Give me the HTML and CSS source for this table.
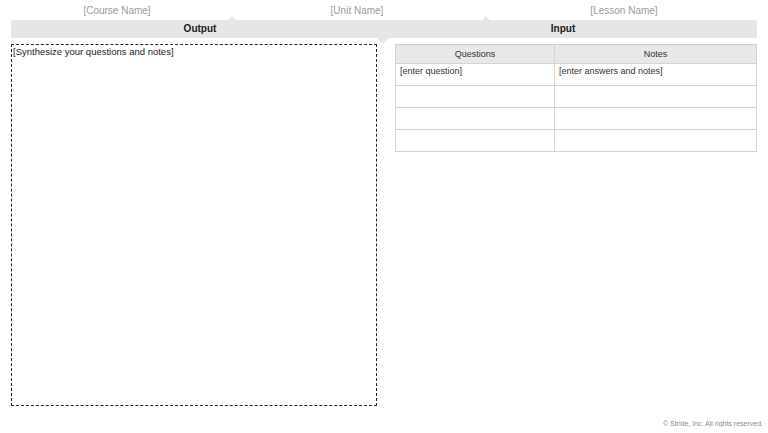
FILE: index.html
```html
<!DOCTYPE html>
<html lang="en">
<head>
    <meta charset="UTF-8">
    <meta name="viewport" content="width=device-width, initial-scale=1.0">
    <title>Notes</title>
    <link rel="stylesheet" href="styles.css">
</head>
<body>
    <div class="page">
        <div class="crumbs">
            <div class="crumb">[Course Name]</div>
            <div class="crumb notch-unit">[Unit Name]</div>
            <div class="crumb notch-lesson">[Lesson Name]</div>
        </div>
        <div class="bar">
            <div class="bar-title out">Output</div>
            <div class="bar-title in">Input</div>
        </div>
        <div class="main">
            <div class="synth">[Synthesize your questions and notes]</div>
            <table class="notes">
                <tr><th class="q">Questions</th><th>Notes</th></tr>
                <tr><td>[enter question]</td><td>[enter answers and notes]</td></tr>
                <tr><td></td><td></td></tr>
                <tr><td></td><td></td></tr>
                <tr><td></td><td></td></tr>
            </table>
        </div>
        <div class="footer">&copy; Stride, Inc. All rights reserved.</div>
    </div>
</body>
</html>
```

FILE: styles.css
```css
body {margin: 0; font-family: "Liberation Sans", Arial, sans-serif; color: #222; background: #fff;}
.page {padding: 0 11px; width: 746px;}

.crumbs {display: grid; grid-template-columns: 212px 268px 266px; height: 20px;}
.crumb {font-size: 10px; color: #9a9a9a; text-align: center; line-height: 22px; position: relative;}
.notch-unit::before, .notch-lesson::before {content: ""; position: absolute; bottom: 0; border: 6px solid transparent; border-top: 0; border-bottom: 6px solid #e6e6e6;}
.notch-unit::before {left: 3px;}
.notch-lesson::before {left: -11px;}

.bar {display: grid; grid-template-columns: 372px 374px; background: #e6e6e6; height: 18px; position: relative;}
.bar::after {content: ""; position: absolute; left: 366px; top: 18px; border: 6px solid transparent; border-bottom: 0; border-top: 6px solid #e6e6e6;}
.bar-title {font-size: 10px; font-weight: bold; text-align: center; line-height: 18px; color: #1a1a1a;}
.bar-title.out {padding-left: 6px;}
.bar-title.in {padding-right: 14px;}

.main {display: flex; gap: 18px; margin-top: 6px; align-items: flex-start;}
.synth {width: 362px; height: 360px; border: 1px dashed #222; font-size: 9.5px; line-height: 14px; padding: 0 1px; flex-shrink: 0;}

.notes {width: 362px; border-collapse: collapse; font-size: 9px; color: #333; table-layout: fixed;}
.notes th, .notes td {border: 1px solid #d4d4d4;}
.notes th.q {width: 158px;}
.notes th {background: #e8e8e8; font-weight: normal; height: 18px; padding: 0; text-align: center;}
.notes td {height: 19px; vertical-align: top; padding: 2px 4px 0;}

.footer {text-align: right; font-size: 7px; color: #888; margin-top: 14px; margin-right: -6px;}
```
